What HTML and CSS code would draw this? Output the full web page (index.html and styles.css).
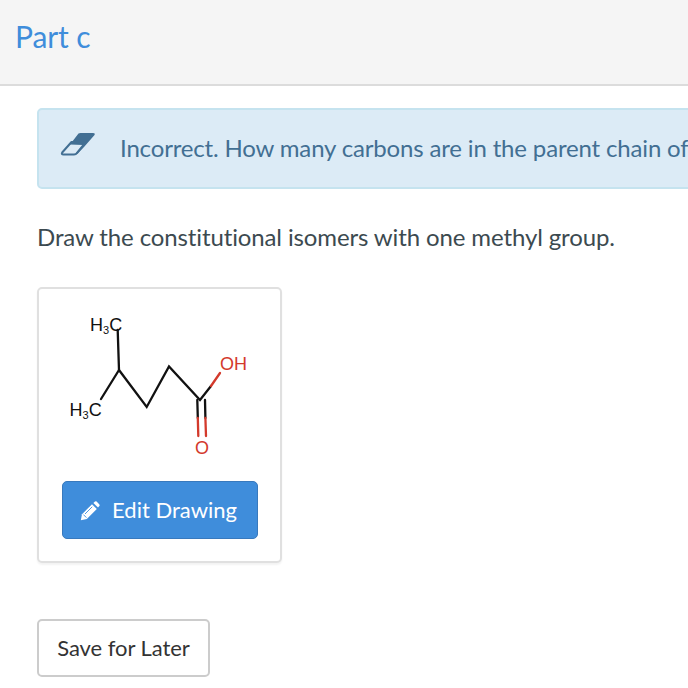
FILE: index.html
```html
<!DOCTYPE html>
<html lang="en">
<head>
<meta charset="utf-8">
<title>Part c</title>
<link rel="stylesheet" href="styles.css">
</head>
<body>
<header class="part-header"><h2 class="part-title">Part c</h2></header>
<main class="part-body">
  <div class="alert">
    <svg class="eraser" viewBox="0 0 36 26" width="36" height="26" aria-hidden="true">
      <path d="M2.2 20.5 L11.5 10 H26 L17 21 Q16 22.5 14 22.5 H3.5 Q1 22.5 2.2 20.5 Z" fill="#dcebf6" stroke="#426f93" stroke-width="2" stroke-linejoin="round"/>
      <path d="M10 12.5 L18.5 1.6 Q19.2 1 20.5 1 H33 Q35.5 1 34.5 3 L24 15 L17 22 L16 21 L23 13 Z" fill="#426f93"/>
    </svg>
    <p class="alert-text">Incorrect. How many carbons are in the parent chain of</p>
  </div>
  <p class="prompt">Draw the constitutional isomers with one methyl group.</p>
  <section class="card">
    <svg class="molecule" viewBox="0 0 196 160" width="196" height="160" role="img" aria-label="4-methylpentanoic acid">
      <g fill="none" stroke-linecap="round">
        <path d="M55.7 31 L57 71 L84.7 108 L107 67.5 L138 101 L149 87" stroke="#111" stroke-width="2.3"/>
        <path d="M57 71 L39 100" stroke="#111" stroke-width="2.3"/>
        <path d="M149 87 L158 74" stroke="#d33a2c" stroke-width="2.3"/>
        <path d="M135.3 101 L135.8 119 M143 101 L143.4 119" stroke="#111" stroke-width="2.3"/>
        <path d="M135.8 119 L136.3 137 M143.4 119 L144 137" stroke="#d33a2c" stroke-width="2.3"/>
      </g>
      <g class="atoms">
        <text x="28" y="32">H<tspan class="sub" dy="3">3</tspan><tspan dy="-3">C</tspan></text>
        <text x="7.5" y="117">H<tspan class="sub" dy="3">3</tspan><tspan dy="-3">C</tspan></text>
        <text class="hetero" x="158" y="71">OH</text>
        <text class="hetero" x="133" y="155">O</text>
      </g>
    </svg>
    <button class="btn btn-primary" type="button">
      <svg class="pencil" viewBox="0 0 20 20" width="20" height="20" aria-hidden="true">
        <path d="M.8 19.2 L2 13.2 L12 3.2 L16.8 8 L6.8 18 Z" fill="#fff"/>
        <path d="M13.4 2 L15 .6 Q15.8 0 16.6 .6 L19.4 3.4 Q20 4.2 19.4 5 L18 6.6 Z" fill="#fff"/>
        <path d="M3.4 13.6 L6.4 16.6 M5 13 L12.2 5.8" fill="none" stroke="#3f8ddb" stroke-width=".9"/>
      </svg>
      <span>Edit Drawing</span>
    </button>
  </section>
  <button class="btn btn-secondary" type="button">Save for Later</button>
</main>
</body>
</html>
```
FILE: styles.css
```css
html, body {
  margin: 0;
  padding: 0;
  height: 688px;
  overflow: hidden;
  background: #fff;
  font-family: Lato, "Liberation Sans", sans-serif;
}
.part-header {
  height: 84px;
  display: flex;
  align-items: center;
  padding-left: 15px;
  background: #f5f5f5;
  border-bottom: 2px solid #dcdcdc;
}
.part-title {
  margin: 0 0 12px;
  font-size: 30px;
  letter-spacing: -.1px;
  font-weight: 400;
  color: #3f8ddb;
}
.part-body {
  padding: 22px 0 0 37px;
}
.alert {
  display: flex;
  align-items: center;
  gap: 24px;
  width: 700px;
  height: 77px;
  padding-left: 21px;
  background: #dcebf6;
  border: 2px solid #c5e3ef;
  border-radius: 5px;
  white-space: nowrap;
}
.eraser { flex: none; margin-bottom: 7px; }
.alert-text {
  margin: 0 0 2px;
  font-size: 24px;
  letter-spacing: -.16px;
  color: #426f93;
}
.prompt {
  margin: 31px 0 33px;
  font-size: 24px;
  letter-spacing: -.12px;
  line-height: 34px;
  color: #3c4a50;
}
.card {
  box-sizing: border-box;
  width: 245px;
  height: 276px;
  display: flex;
  flex-direction: column;
  align-items: center;
  padding-top: 10px;
  background: #fff;
  border: 2px solid #e0e0e0;
  border-radius: 5px;
  box-shadow: 0 2px 2px rgba(0,0,0,.05);
}
.molecule { flex: none; margin-bottom: 22px; }
.atoms text {
  font-family: "Liberation Sans", Arial, sans-serif;
  font-size: 18px;
  fill: #111;
}
.atoms .sub { font-size: 11px; }
.atoms .hetero { fill: #d33a2c; }
.btn {
  font-family: inherit;
  font-size: 22px;
  border-radius: 5px;
  cursor: pointer;
}
.btn-primary {
  box-sizing: border-box;
  width: 196px;
  height: 58px;
  display: flex;
  align-items: center;
  justify-content: center;
  gap: 12px;
  padding: 0 2px 2px 0;
  color: #fff;
  background: #3f8ddb;
  border: 1px solid #3879bd;
}
.pencil { flex: none; margin-top: 4px; }
.btn-secondary {
  display: block;
  box-sizing: border-box;
  width: 173px;
  height: 58px;
  margin-top: 56px;
  padding: 0 0 2px;
  letter-spacing: -.05px;
  color: #333;
  background: #fff;
  border: 2px solid #ccc;
}
```
